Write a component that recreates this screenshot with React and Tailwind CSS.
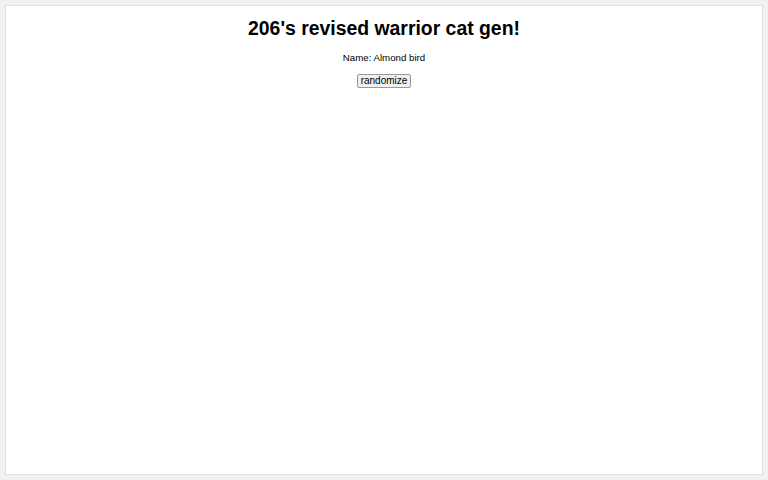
export default function App() {
  return (
    <div className="h-[480px] w-[768px] bg-[#f2f2f2] p-[5px] font-['Liberation_Sans',Arial,sans-serif]">
      <div className="flex h-full flex-col items-center border border-[#e0e0e0] bg-white">
        <h1 className="mt-[10px] text-[19.4px] font-bold leading-[24px] text-black">
          206's revised warrior cat gen!
        </h1>
        <p className="mt-[12px] text-[9.7px] leading-[12px] text-black">Name: Almond bird</p>
        <button className="mt-[10px] rounded-[2px] border border-[#999999] bg-[#f0f0f0] px-[3px] text-[10px] leading-[12px] text-black">
          randomize
        </button>
      </div>
    </div>
  );
}
